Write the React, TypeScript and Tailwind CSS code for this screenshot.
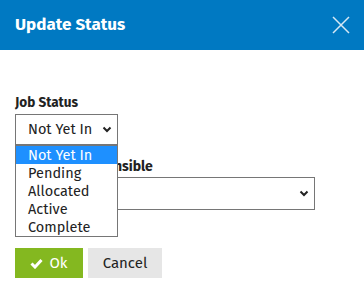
import React from 'react'

const font = { fontFamily: '"Fira Sans", Lato, "Open Sans", sans-serif' }

const Chevron: React.FC = () => (
  <svg width="10" height="7" viewBox="0 0 10 7" className="shrink-0">
    <path d="M1.5 1.5 L5 5 L8.5 1.5" fill="none" stroke="#222" strokeWidth="2" />
  </svg>
)

export default function App() {
  const options = ['Not Yet In', 'Pending', 'Allocated', 'Active', 'Complete']

  return (
    <div className="w-[364px] h-[293px] bg-white text-[#222]" style={font}>
      <div className="h-[50px] bg-[#0079c2] flex items-center justify-between pl-[15px] pr-[14px]">
        <h1 className="text-white text-[17px] font-bold">Update Status</h1>
        <svg width="18" height="18" viewBox="0 0 18 18">
          <path d="M1 1 L17 17 M17 1 L1 17" stroke="#d6e8f5" strokeWidth="1.5" />
        </svg>
      </div>

      <div className="px-[15px] pt-[44px]">
        <label className="block text-[13.5px] font-bold leading-[18px]">Job Status</label>
        <div className="relative mt-[2px] w-[103px]">
          <div className="h-[31px] border border-[#767676] flex items-center justify-between pl-[12px] pr-[5px] text-[14.5px]">
            <span>Not Yet In</span>
            <Chevron />
          </div>
          {/* open native list */}
          <ul className="absolute left-0 top-[31px] w-[103px] bg-white border border-[#767676] z-10 text-[14.5px] leading-[18px] py-0">
            {options.map((o, i) => (
              <li key={o} className={i === 0 ? 'bg-[#1e90ff] text-white pl-[12px]' : 'pl-[12px]'}>
                {o}
              </li>
            ))}
          </ul>
        </div>

        <label className="block mt-[13px] text-[14px] font-bold leading-[18px]">Engineer Responsible</label>
        <div className="mt-[1px] w-[300px] h-[33px] border border-[#767676] flex items-center justify-end pr-[5px]">
          <Chevron />
        </div>

        <div className="flex gap-[5px] mt-[38px]">
          <button className="w-[68px] h-[30px] bg-[#84b820] text-white text-[15px] flex items-center justify-center gap-[6px]">
            <svg width="13" height="11" viewBox="0 0 13 11">
              <path d="M1.5 5.5 L5 9 L11.5 2" fill="none" stroke="white" strokeWidth="3" />
            </svg>
            Ok
          </button>
          <button className="w-[74px] h-[30px] bg-[#e6e6e6] text-[#222] text-[15px]">Cancel</button>
        </div>
      </div>
    </div>
  )
}
